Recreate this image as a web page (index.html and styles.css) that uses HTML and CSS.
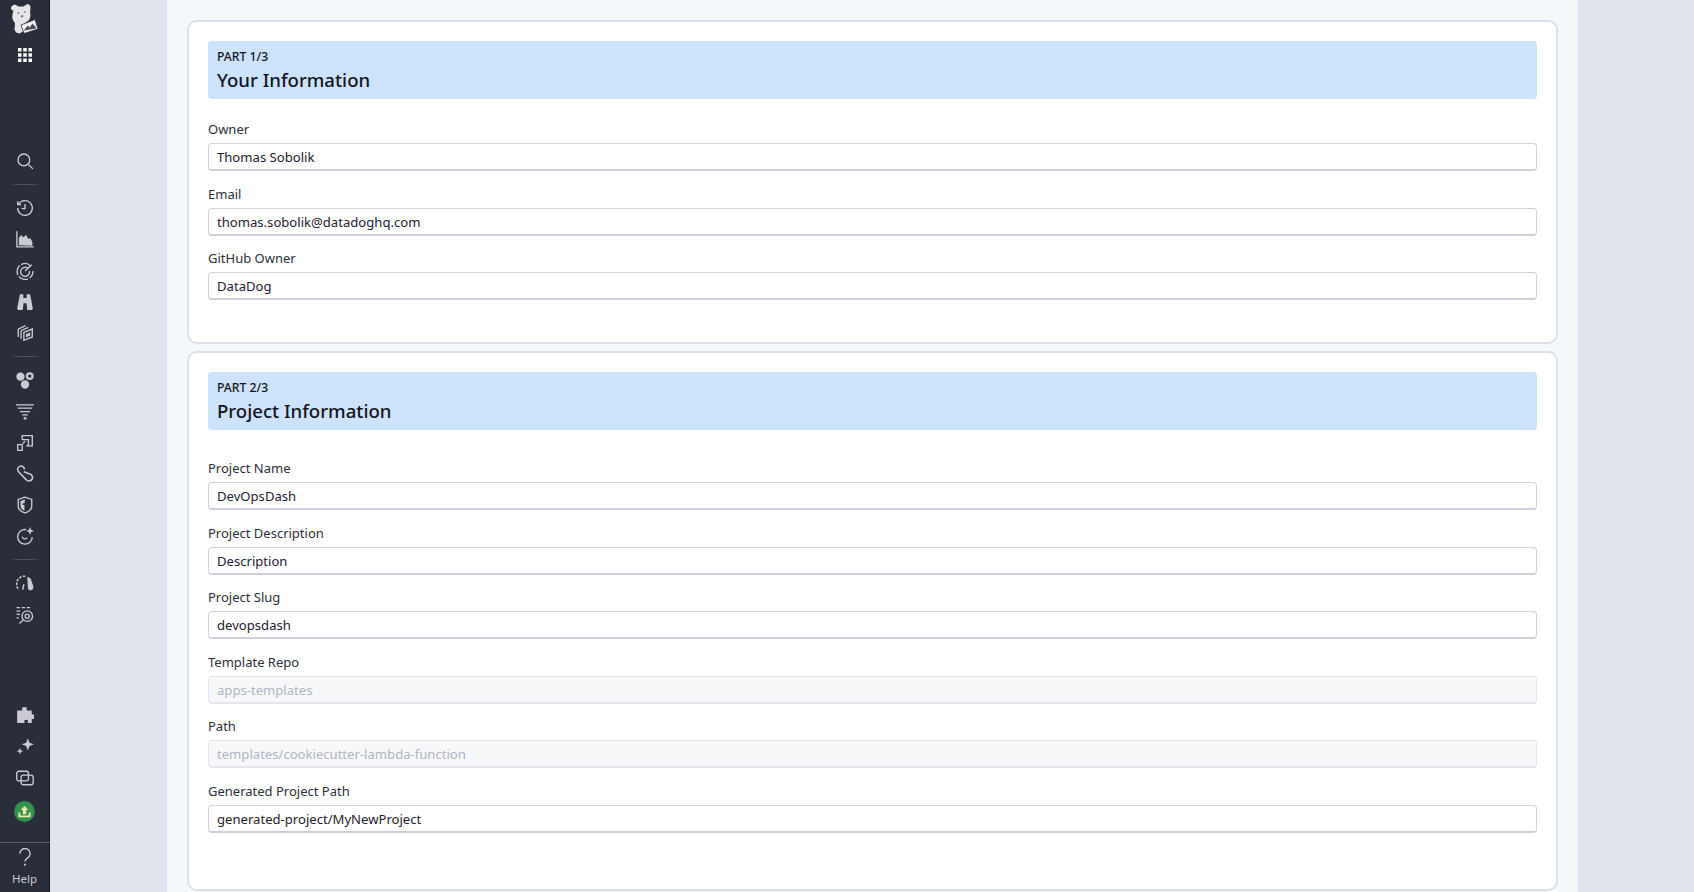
FILE: index.html
```html
<!DOCTYPE html>
<html lang="en">
<head>
<meta charset="utf-8">
<title>Project scaffolding</title>
<link rel="stylesheet" href="styles.css">
</head>
<body>
<nav class="sidebar">
  <svg class="logo" viewBox="0 0 27 30">
    <path fill="#e6e6e8" d="M0 5C-.5 2 3 0 5 1L7.500 2.500h5L15.500.500c2.500-1 4.500 1.500 4 4L19 8c1 3 .5 7-2 9l-2.500 1.500-.5 6-2 3-3.500 2-3.500-1-1.500-3 .5-6L1.500 15C1 12 1.500 9 2.500 7z"/>
    <path fill="#6d6f76" d="M6.500 8.500l1.500-.5.5 1.500-1.500.5zM13 7.500l1.500-.5.3 1.500-1.500.3zM9.500 12l2.500-1 .5 1.500-2 1z"/>
    <path fill="#f0f0f1" stroke="#2a2e3b" stroke-width=".8" d="M10 21 24 15.500 27 25 13 29.500z"/>
    <path fill="#4a4e5b" d="M12.800 26.500l4-5 2 2 2.500-4 3 3 .8 2z"/>
  </svg>
  <svg class="ico grid" viewBox="0 0 16 16"><g fill="#fff"><rect x="1" y="1" width="3.500" height="3.500"/><rect x="6.250" y="1" width="3.500" height="3.500"/><rect x="11.500" y="1" width="3.500" height="3.500"/><rect x="1" y="6.250" width="3.500" height="3.500"/><rect x="6.250" y="6.250" width="3.500" height="3.500"/><rect x="11.500" y="6.250" width="3.500" height="3.500"/><rect x="1" y="11.500" width="3.500" height="3.500"/><rect x="6.250" y="11.500" width="3.500" height="3.500"/><rect x="11.500" y="11.500" width="3.500" height="3.500"/></g></svg>

  <svg class="ico search" viewBox="0 0 16 16"><circle cx="7" cy="7" r="5.200" class="ln"/><path d="M11 11l4 4" class="ln"/></svg>
  <div class="sep"></div>

  <div class="group">
    <svg class="ico" viewBox="0 0 16 16"><path class="ln" d="M2.500 4.500A6.500 6.500 0 1 1 1.500 8M1.500 2v3h3M8 4.500V8.500H5"/></svg>
    <svg class="ico" viewBox="0 0 16 16"><path class="fl" d="M2.500 13.500V7l2-2.500 2 2L9 4.500l2 3.500 1.500-1 2 3.500v3.500z"/><path class="ln" d="M.8 1v14h15"/></svg>
    <svg class="ico" viewBox="0 0 16 16"><path class="ln" stroke-dasharray="9 1.500" d="M13 3.500A7 7 0 1 0 15 8"/><path class="ln" d="M11 6a4 4 0 1 0 1 2"/><path class="ln" d="M8 8l6-5.500"/></svg>
    <svg class="ico" viewBox="0 0 16 16"><path class="fl" d="M3.500 1h3v3.500h3V1h3l1 5 1.500 8-1 1h-4L9.300 9H6.700L6 15H2l-1-1 1.500-8z"/></svg>
    <svg class="ico" viewBox="0 0 16 16"><path class="ln" d="M7 7.500 14.500 4.500v7L7 14.500zM4.500 6 11 3M4.500 6v7M2 4.500 8.500 1.500M2 4.500v7M9.500 9.500l2.500-1v1.500l-2.500 1z"/></svg>
  </div>
  <div class="sep"></div>

  <div class="group">
    <svg class="ico" viewBox="0 0 16 16"><circle class="fl" cx="4" cy="5" r="3.700"/><circle class="fl" cx="12.200" cy="4.500" r="3.500"/><circle cx="12.200" cy="4.500" r="1.500" fill="#2a2e3b"/><circle class="fl" cx="8" cy="12" r="3.700"/></svg>
    <svg class="ico" viewBox="0 0 16 16"><path class="ln" d="M0 2.500h16M1.500 5.500h13M3.500 8.500h9M5.500 11.500h5"/><rect class="fl" x="6.800" y="13.500" width="2.500" height="2"/></svg>
    <svg class="ico" viewBox="0 0 16 16"><path class="ln" d="M5.500 5V1.500h9v9H9M5.500 5H11v5.500M1.500 9.500h4v5h-4zM8 6.500l-2 2"/></svg>
    <svg class="ico" viewBox="0 0 16 16"><path class="ln2" d="M7.500 4a3 3 0 1 0-5 2.200L9 13a3.200 3.200 0 1 0 4.500-4.500L11 7.500 7 6"/></svg>
    <svg class="ico" viewBox="0 0 16 16"><path class="ln" d="M8 1l6 2v6c0 3-3 5-6 6-3-1-6-3-6-6V3z"/><path class="fl" d="M8 3 4 4.500v4.300C4 11 6 12.500 7.500 13V8H6V6.500h1.500z"/></svg>
    <svg class="ico" viewBox="0 0 16 16"><path class="ln" d="M9 2.300A6.500 6.500 0 1 0 14.500 9M5.500 8.500a2.500 2.500 0 0 0 4.500 1"/><path class="fl" d="M12.500 0l1 2.500 2.500 1-2.500 1-1 2.500-1-2.500-2.500-1 2.500-1z"/></svg>
  </div>
  <div class="sep"></div>

  <div class="group">
    <svg class="ico" viewBox="0 0 16 16"><path class="ln2" stroke-dasharray="2.200 1.200" d="M1.800 13A7 7 0 0 1 8.500 2"/><path class="fl" d="M10 2.500l3 1.500 2.500 7c.2 2.500-1.500 3.500-2.500 3.500-1.300 0-2.800-1-2.500-3.500z"/><path class="ln" d="M7 9l-1 5"/></svg>
    <svg class="ico" viewBox="0 0 16 16"><path class="ln" d="M.5 1.500h3M5 1.500h3M9.500 1.500h3M.5 4.500h3M.5 7.500h3M.5 10.500h2"/><circle class="ln" cx="10" cy="9" r="4.700"/><circle class="ln" cx="10" cy="9" r="1.800"/><path class="ln" d="M6.500 12.500 3 15.500"/></svg>
  </div>

  <div class="spacer"></div>

  <div class="group">
    <svg class="ico" viewBox="0 0 16 16"><path class="fl" d="M5.500 1h4v3H14v3.500h2v4h-2V15h-3.500v-2.500h-3V15H1V4h4.500z"/></svg>
    <svg class="ico" viewBox="0 0 16 16"><path class="fl" d="M10.500 1l1.500 4 4 1.500-4 1.500-1.500 4L9 8 5 6.500 9 5zM3.500 9.500l.8 2.200 2.200.8-2.200.8-.8 2.200-.8-2.200-2.200-.8 2.200-.8z"/></svg>
    <svg class="ico" viewBox="0 0 16 16"><rect class="ln" x=".6" y="2" width="10.500" height="8.500" rx="2"/><rect class="ln" x="4.500" y="5.500" width="10.800" height="8.500" rx="2"/></svg>
  </div>
  <div class="badge"><svg viewBox="0 0 16 16"><path fill="#efe8b4" d="M8 2l4 4.500H9.800V11H6.200V6.500H4zM1.500 9h2v3.200h9V9h2v5h-13z"/></svg></div>

  <div class="help">
    <svg class="ico" viewBox="0 0 16 16"><path class="ln" d="M3.500 5a4.500 4.500 0 1 1 7.500 3.300C9.500 9.500 8 10 8 12"/><rect class="fl" x="7.200" y="14" width="1.600" height="1.600"/></svg>
    <span class="help-text">Help</span>
  </div>
</nav>

<main class="gutter">
  <div class="panel">
    <section class="card">
      <header class="band">
        <div class="part">PART 1/3</div>
        <h2 class="title">Your Information</h2>
      </header>
      <div class="fields">
        <label class="field"><span class="lbl">Owner</span><input class="inp" value="Thomas Sobolik"></label>
        <label class="field"><span class="lbl">Email</span><input class="inp" value="thomas.sobolik@datadoghq.com"></label>
        <label class="field"><span class="lbl">GitHub Owner</span><input class="inp" value="DataDog"></label>
      </div>
    </section>
    <section class="card card-two">
      <header class="band">
        <div class="part">PART 2/3</div>
        <h2 class="title">Project Information</h2>
      </header>
      <div class="fields fields-two">
        <label class="field"><span class="lbl">Project Name</span><input class="inp" value="DevOpsDash"></label>
        <label class="field"><span class="lbl">Project Description</span><input class="inp" value="Description"></label>
        <label class="field"><span class="lbl">Project Slug</span><input class="inp" value="devopsdash"></label>
        <label class="field"><span class="lbl">Template Repo</span><input class="inp" value="apps-templates" disabled></label>
        <label class="field"><span class="lbl">Path</span><input class="inp" value="templates/cookiecutter-lambda-function" disabled></label>
        <label class="field"><span class="lbl">Generated Project Path</span><input class="inp" value="generated-project/MyNewProject"></label>
      </div>
    </section>
  </div>
</main>
</body>
</html>
```
FILE: styles.css
```css
* { box-sizing: border-box; }
html, body { margin: 0; height: 892px; overflow: hidden; }
body {
  display: flex;
  background: #e0e3ec;
  font-family: "Noto Sans", sans-serif;
  color: #1e2230;
}
.sidebar {
  width: 50px;
  height: 892px;
  flex: none;
  background: #2a2e3b;
  border-right: 1px solid #14161d;
  display: flex;
  flex-direction: column;
  align-items: center;
}
.logo { width: 27px; height: 30px; margin-top: 4px; flex: none; overflow: visible; }
.ico { width: 18px; height: 18px; flex: none; display: block; }
.grid { width: 16px; height: 16px; margin-top: 13px; }
.search { margin-top: 89px; }
.ln { fill: none; stroke: #c9cbd1; stroke-width: 1.2; }
.ln2 { fill: none; stroke: #c9cbd1; stroke-width: 1.4; }
.fl { fill: #c9cbd1; }
.sep { width: 30px; height: 1px; background: linear-gradient(to right, transparent, #50545f 30%, #50545f 70%, transparent); margin: 14px 0; flex: none; }
.group { display: flex; flex-direction: column; gap: 13.25px; align-items: center; }
.spacer { flex: 1; }
.badge {
  width: 21px; height: 21px; border-radius: 50%;
  background: radial-gradient(circle, #35934f 55%, #256f40 100%);
  display: flex; align-items: center; justify-content: center;
  margin: 14.5px 0 20px;
  flex: none;
}
.badge svg { width: 15px; height: 15px; }
.help {
  width: 50px;
  height: 50px;
  flex: none;
  border-top: 1px solid #5a5e6a;
  display: flex; flex-direction: column; align-items: center;
  padding-top: 5px;
}
.help-text { font-size: 11.5px; line-height: 16px; color: #c9cbd1; margin-top: 5px; }
.gutter { flex: 1; padding: 0 116px 0 117px; min-width: 0; }
.panel {
  height: 892px;
  background: #f3f8fb;
  padding: 20px 20px 0;
}
.card {
  background: #fff;
  border: 2px solid #dcdfe8;
  border-radius: 10px;
  padding: 19px 19px 0;
  height: 324px;
}
.card-two { margin-top: 7px; height: 540px; }
.band {
  background: #cde2fb;
  border-radius: 4px;
  height: 57.5px;
  padding: 6px 9px 0;
}
.part { font-size: 12.2px; line-height: 19px; font-weight: 500; color: #12151f; }
.title { margin: 0; font-size: 18.6px; line-height: 28px; font-weight: 500; color: #12151f; }
.fields { display: flex; flex-direction: column; gap: 10.5px; padding-top: 18.5px; }
.fields-two { padding-top: 26.5px; }
.field { display: flex; flex-direction: column; gap: 2px; }
.lbl { font-size: 13px; line-height: 24px; color: #2b2f3c; }
.inp {
  height: 28px;
  width: 100%;
  border: 1px solid #d2d4dd;
  border-bottom: 2px solid #cdd0da;
  border-radius: 4px;
  background: #fff;
  padding: 1px 8px 0;
  font: 13.1px/20px "Noto Sans", sans-serif;
  color: #1e2230;
  outline: none;
}
.inp:disabled {
  background: #f7f8fa;
  border-color: #e3e5ec;
  color: #b0b4c2;
}
```
